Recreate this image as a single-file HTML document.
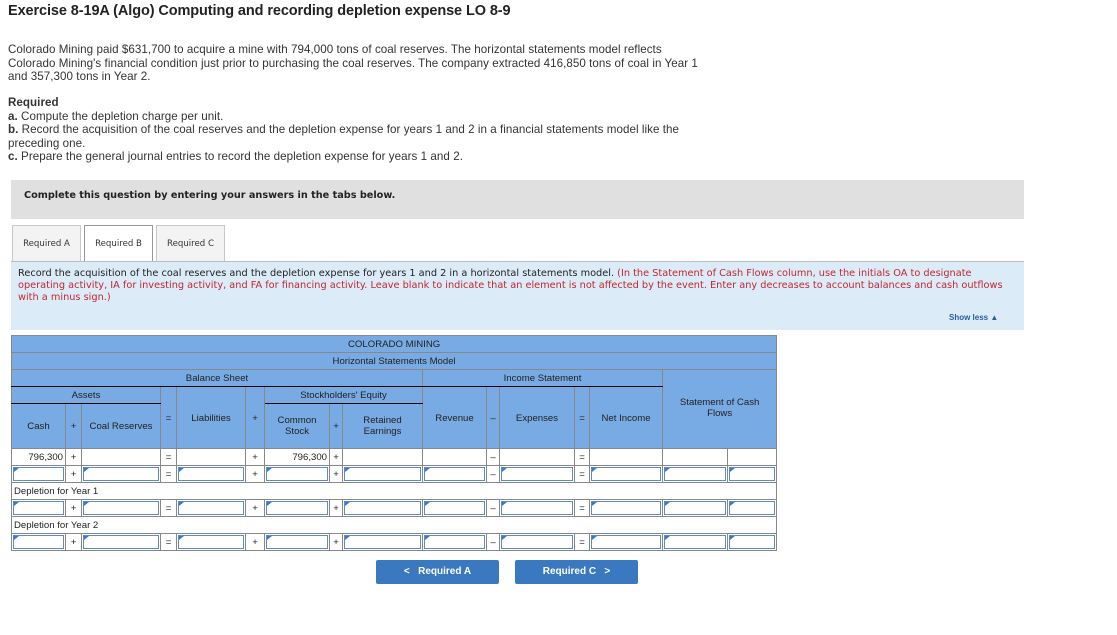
<!DOCTYPE html><html><head><style>
body{margin:0;width:1117px;height:635px;background:#fff;font-family:"Liberation Sans",sans-serif;position:relative;overflow:hidden;color:#222}
.a{position:absolute}
h1{position:absolute;left:8px;top:3px;margin:0;font-size:14.5px;font-weight:bold;color:#222;letter-spacing:-0.1px}
.p{font-size:11.6px;line-height:13.5px;color:#333;letter-spacing:0.05px}
.tab{position:absolute;top:225px;height:36px;width:69px;border:1px solid #c8c8c8;border-bottom:none;background:#f3f3f3;font-family:"DejaVu Sans",sans-serif;font-size:8.6px;text-align:center;line-height:36px;box-sizing:border-box;color:#333}
table{position:absolute;left:11px;top:335px;border-collapse:collapse;table-layout:fixed;width:765px;font-size:9.6px;color:#222}
td{border:1px solid #888;padding:0;text-align:center;height:16px;overflow:hidden;white-space:nowrap;box-sizing:border-box}
.h td,td.h{background:#78aae3}
.w td{background:#fff}
.in{position:relative}
.in:before{content:"";position:absolute;left:1px;top:1px;right:1px;bottom:1px;border:1.5px solid #5b8dcc}
.in:after{content:"";position:absolute;left:2px;top:2px;border-left:5px solid #3b78c8;border-bottom:4px solid transparent}
.btn{position:absolute;top:560px;height:24px;width:123px;background:#3a78c0;border-radius:2px;color:#fff;font-weight:bold;font-size:10px;line-height:24px;text-align:center}
.pb{padding-top:2px}
</style></head><body>
<h1>Exercise 8-19A (Algo) Computing and recording depletion expense LO 8-9</h1>
<div class="a p" style="left:8px;top:43px;width:800px">Colorado Mining paid $631,700 to acquire a mine with 794,000 tons of coal reserves. The horizontal statements model reflects<br>Colorado Mining's financial condition just prior to purchasing the coal reserves. The company extracted 416,850 tons of coal in Year 1<br>and 357,300 tons in Year 2.</div>
<div class="a p" style="left:8px;top:96px;width:800px"><b>Required</b><br><b>a.</b> Compute the depletion charge per unit.<br><b>b.</b> Record the acquisition of the coal reserves and the depletion expense for years 1 and 2 in a financial statements model like the<br>preceding one.<br><b>c.</b> Prepare the general journal entries to record the depletion expense for years 1 and 2.</div>
<div class="a" style="left:11px;top:180px;width:1013px;height:39px;background:#e0e0e0"></div>
<div class="a" style="left:24px;top:190px;font-family:'DejaVu Sans',sans-serif;font-size:9.7px;font-weight:bold;color:#222">Complete this question by entering your answers in the tabs below.</div>
<div class="tab" style="left:12px">Required A</div>
<div class="tab" style="left:84px;background:#fff;border-color:#999;height:37px">Required B</div>
<div class="tab" style="left:156px">Required C</div>
<div class="a" style="left:11px;top:261px;width:1013px;height:68px;background:#dbebf8;border-top:1px solid #bbb"></div>
<div class="a" style="left:18px;top:268px;width:996px;font-family:'DejaVu Sans',sans-serif;font-size:9.75px;line-height:12px;color:#222">Record the acquisition of the coal reserves and the depletion expense for years 1 and 2 in a horizontal statements model. <span style="color:#c4262e">(In the Statement of Cash Flows column, use the initials OA to designate operating activity, IA for investing activity, and FA for financing activity. Leave blank to indicate that an element is not affected by the event. Enter any decreases to account balances and cash outflows with a minus sign.)</span></div>
<div class="a" style="left:949px;top:313px;font-size:8px;font-weight:bold;color:#2a5d9f">Show less ▲</div>
<table>
<colgroup><col style="width:54px"><col style="width:16px"><col style="width:79px"><col style="width:16px"><col style="width:69px"><col style="width:19px"><col style="width:65px"><col style="width:13px"><col style="width:80px"><col style="width:64px"><col style="width:13px"><col style="width:75px"><col style="width:15px"><col style="width:73px"><col style="width:65px"><col style="width:49px"></colgroup>
<tr class="h"><td colspan="16" style="height:17px">COLORADO MINING</td></tr>
<tr class="h"><td colspan="16" style="height:17px">Horizontal Statements Model</td></tr>
<tr class="h"><td colspan="9" style="height:17px;border-bottom:1px solid #000">Balance Sheet</td><td colspan="5" style="border-bottom:1px solid #000">Income Statement</td><td colspan="2" rowspan="3" style="white-space:normal;vertical-align:top;padding-top:27px;line-height:11px">Statement of Cash<br>Flows</td></tr>
<tr class="h"><td colspan="3" style="height:17px;border-bottom:1px solid #000">Assets</td><td rowspan="2" class="pb">=</td><td rowspan="2" class="pb">Liabilities</td><td rowspan="2" class="pb">+</td><td colspan="3" style="border-bottom:1px solid #000">Stockholders' Equity</td><td rowspan="2" class="pb">Revenue</td><td rowspan="2" class="pb">–</td><td rowspan="2" class="pb">Expenses</td><td rowspan="2" class="pb">=</td><td rowspan="2" class="pb">Net Income</td></tr>
<tr class="h"><td style="height:45px">Cash</td><td>+</td><td>Coal Reserves</td><td style="line-height:11px">Common<br>Stock</td><td>+</td><td style="line-height:11px">Retained<br>Earnings</td></tr>
<tr class="w"><td style="text-align:right;padding-right:2px;height:17px">796,300</td><td>+</td><td></td><td>=</td><td></td><td>+</td><td style="text-align:right;padding-right:2px">796,300</td><td>+</td><td></td><td></td><td>–</td><td></td><td>=</td><td></td><td></td><td></td></tr>
<tr class="w"><td class="in" style="height:17px"></td><td>+</td><td class="in"></td><td>=</td><td class="in"></td><td>+</td><td class="in"></td><td>+</td><td class="in"></td><td class="in"></td><td>–</td><td class="in"></td><td>=</td><td class="in"></td><td class="in"></td><td class="in"></td></tr>
<tr class="w"><td colspan="16" style="text-align:left;padding-left:2px;height:17px">Depletion for Year 1</td></tr>
<tr class="w"><td class="in" style="height:17px"></td><td>+</td><td class="in"></td><td>=</td><td class="in"></td><td>+</td><td class="in"></td><td>+</td><td class="in"></td><td class="in"></td><td>–</td><td class="in"></td><td>=</td><td class="in"></td><td class="in"></td><td class="in"></td></tr>
<tr class="w"><td colspan="16" style="text-align:left;padding-left:2px;height:17px">Depletion for Year 2</td></tr>
<tr class="w"><td class="in" style="height:17px"></td><td>+</td><td class="in"></td><td>=</td><td class="in"></td><td>+</td><td class="in"></td><td>+</td><td class="in"></td><td class="in"></td><td>–</td><td class="in"></td><td>=</td><td class="in"></td><td class="in"></td><td class="in"></td></tr>
</table>
<div class="btn" style="left:376px">&lt;&nbsp;&nbsp; Required A</div>
<div class="btn" style="left:515px">Required C &nbsp;&nbsp;&gt;</div>
</body></html>
